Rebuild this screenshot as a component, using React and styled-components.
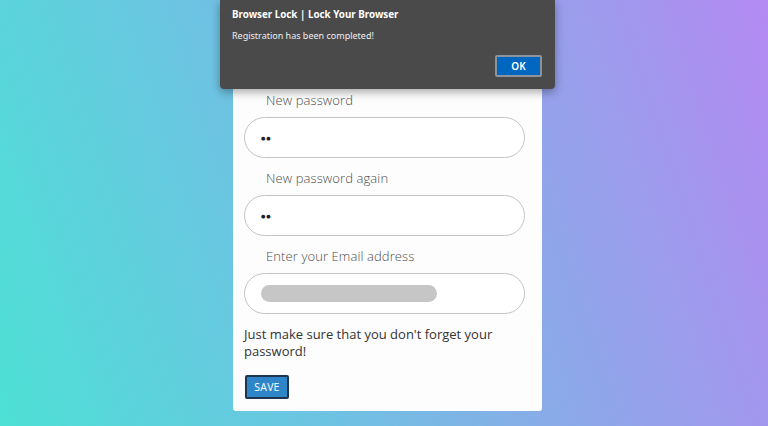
import React from "react";
import styled, { createGlobalStyle } from "styled-components";

const Global = createGlobalStyle`
  html, body { margin: 0; padding: 0; height: 100%; }
  body {
    font-family: "Open Sans", "Noto Sans", sans-serif;
    background: linear-gradient(72deg, #4de0d5 0%, #6cc4e2 35%, #8aaae8 62%, #b38af2 100%);
    overflow: hidden;
  }
  #root { height: 100%; }
`;

const Page = styled.div`
  position: relative;
  height: 426px;
  display: flex;
  justify-content: center;
  padding-left: 7px;
  box-sizing: border-box;
`;

const Card = styled.div`
  width: 309px;
  height: 411px;
  box-sizing: border-box;
  background: #fdfdfd;
  border-radius: 0 0 3px 3px;
  padding: 91px 17px 11px 11px;
  display: flex;
  flex-direction: column;
`;

const Label = styled.div`
  font-size: 13px;
  line-height: 18px;
  font-weight: 300;
  color: #4d4d4d;
  padding-left: 22px;
  margin-bottom: 8px;
  letter-spacing: 0.1px;
`;

const Field = styled.div`
  height: 41px;
  box-sizing: border-box;
  border: 1px solid #c4c4c4;
  border-radius: 21px;
  background: #fff;
  display: flex;
  align-items: center;
  padding-left: ${(p) => p.$pad || 16}px;
  margin-bottom: 11px;
`;

const Dots = styled.span`
  font-size: 5px;
  letter-spacing: 1px;
  color: #222;
  line-height: 1;
  font-family: "DejaVu Sans", sans-serif;
  padding-top: 2px;
`;

const Redacted = styled.span`
  display: block;
  width: 176px;
  height: 17px;
  border-radius: 9px;
  background: #c6c6c6;
`;

const Note = styled.p`
  margin: 1px 0 15px 0;
  font-size: 13px;
  line-height: 17px;
  color: #333;
  font-weight: 400;
`;

const SaveButton = styled.button`
  align-self: flex-start;
  margin-left: 1px;
  width: 44px;
  height: 24px;
  box-sizing: border-box;
  background: #2e86c8;
  border: 2px solid #1d3550;
  border-radius: 2px;
  color: #fff;
  font-family: "Open Sans", sans-serif;
  font-size: 10.5px;
  font-weight: 500;
  padding: 0;
  letter-spacing: 0.2px;
`;

const Dialog = styled.div`
  position: absolute;
  top: 0;
  left: 50%;
  margin-left: -164px;
  width: 335px;
  height: 89px;
  box-sizing: border-box;
  background: #4a4a4a;
  border-radius: 0 0 4px 4px;
  box-shadow: 0 3px 10px rgba(0, 0, 0, 0.35);
  padding: 8px 13px 12px 12px;
  display: flex;
  flex-direction: column;
  font-family: "Noto Sans", "Open Sans", sans-serif;
  color: #fff;
`;

const DialogTitle = styled.div`
  font-size: 9.8px;
  font-weight: 700;
  line-height: 14px;
`;

const DialogMessage = styled.div`
  margin-top: 7px;
  font-size: 9px;
  line-height: 14px;
  color: #eee;
`;

const DialogActions = styled.div`
  margin-top: auto;
  display: flex;
  justify-content: flex-end;
`;

const OkButton = styled.button`
  width: 47px;
  height: 22px;
  box-sizing: border-box;
  background: #0067c0;
  border: 2px solid #8c939a;
  border-radius: 2px;
  color: #fff;
  font-family: "Noto Sans", sans-serif;
  font-size: 10px;
  font-weight: 600;
  padding: 0;
`;

export default function App() {
  return (
    <>
      <Global />
      <Page>
        <Card>
          <Label>New password</Label>
          <Field>
            <Dots>●●</Dots>
          </Field>
          <Label>New password again</Label>
          <Field>
            <Dots>●●</Dots>
          </Field>
          <Label>Enter your Email address</Label>
          <Field>
            <Redacted />
          </Field>
          <Note>Just make sure that you don't forget your password!</Note>
          <SaveButton>SAVE</SaveButton>
        </Card>
        <Dialog>
          <DialogTitle>Browser Lock | Lock Your Browser</DialogTitle>
          <DialogMessage>Registration has been completed!</DialogMessage>
          <DialogActions>
            <OkButton>OK</OkButton>
          </DialogActions>
        </Dialog>
      </Page>
    </>
  );
}
